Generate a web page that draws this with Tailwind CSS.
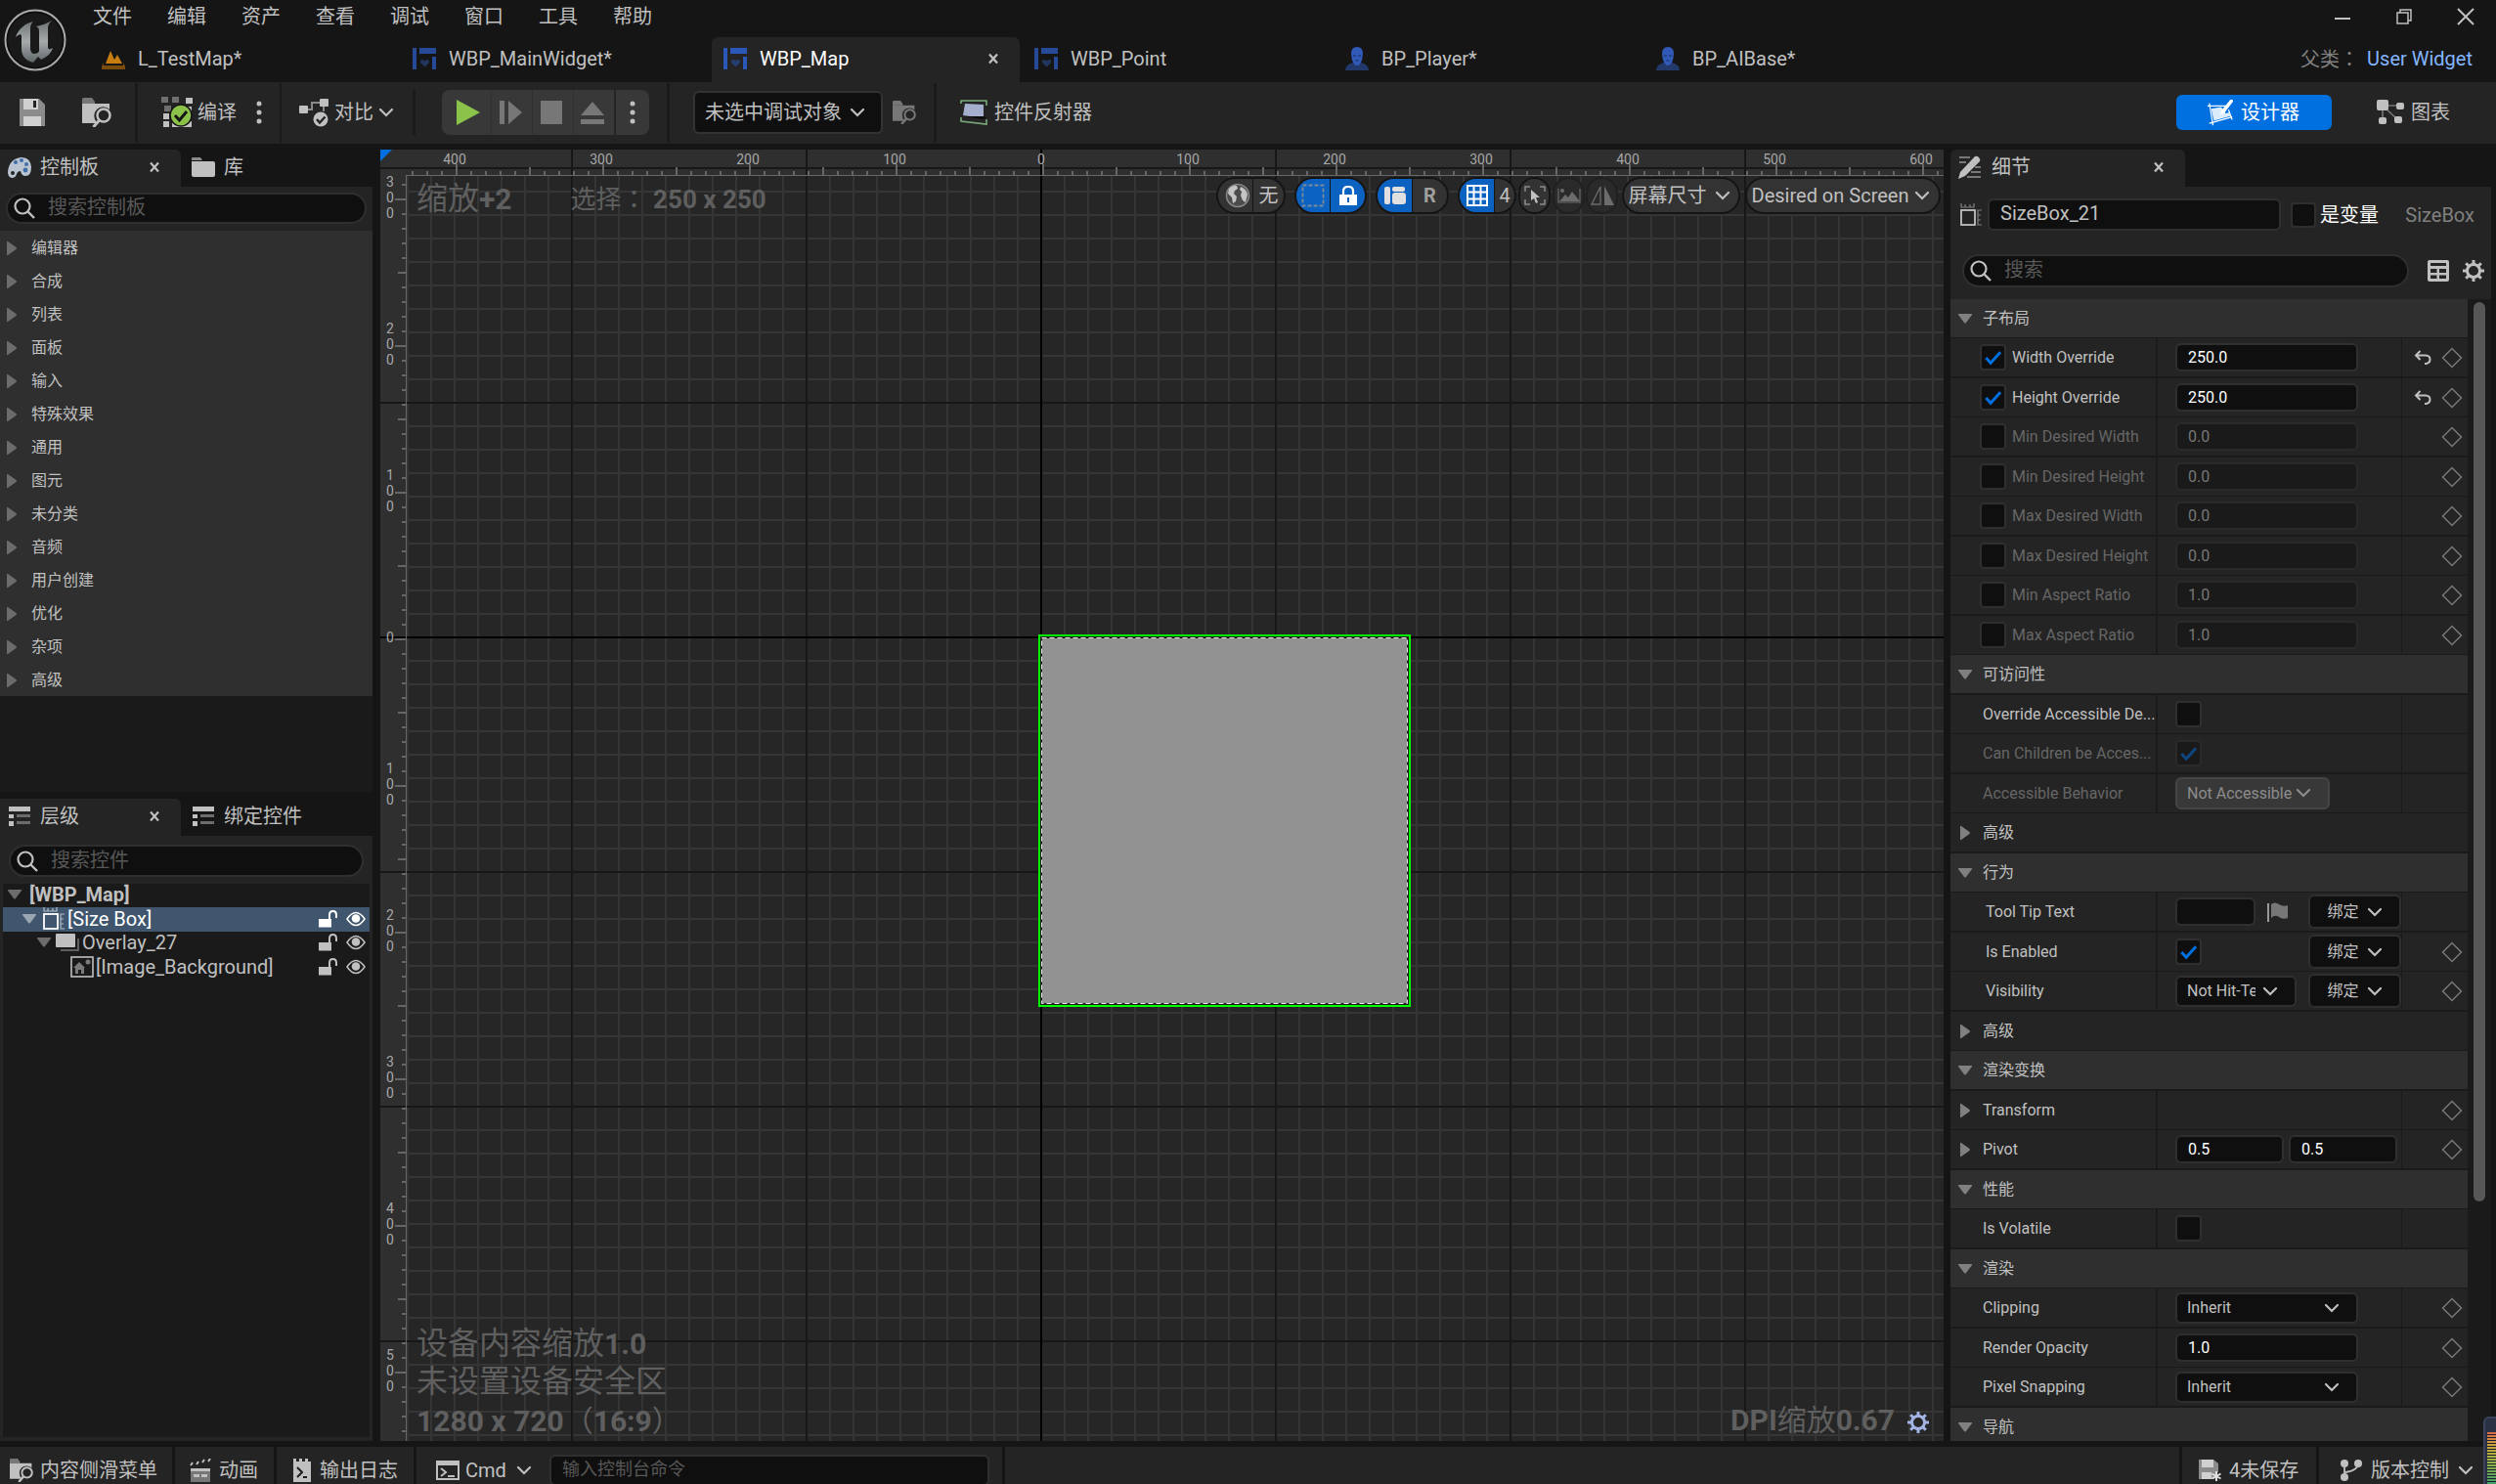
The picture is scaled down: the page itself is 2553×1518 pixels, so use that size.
<!DOCTYPE html>
<html lang="zh-CN">
<head>
    <meta charset="UTF-8">
    <meta name="viewport" content="width=device-width, initial-scale=1.0">
    <title>WBP_Map</title>
    <script src="https://cdn.jsdelivr.net/npm/@tailwindcss/browser@4"></script>
</head>
<body class="h-screen flex flex-col overflow-hidden bg-[#151515] text-[#c0c0c0] text-xl leading-6 font-['Roboto','Noto_Sans_CJK_SC',sans-serif]">

    <!-- icon sprite -->
    <svg class="hidden" xmlns="http://www.w3.org/2000/svg">
        <symbol id="i-close" viewBox="0 0 12 12"><path d="M2 1.500l8 9M10 1.500l-8 9" stroke="currentColor" stroke-width="2.200" fill="none"/></symbol>
        <symbol id="i-chevron" viewBox="0 0 16 16"><path d="M2 5l6 6 6-6" stroke="currentColor" stroke-width="2.200" fill="none" stroke-linecap="round"/></symbol>
        <symbol id="i-right" viewBox="0 0 12 16"><path d="M1 1.500q0-1 1-.5l8.500 6q1 1 0 2l-8.500 6q-1 .5-1-.5z" fill="currentColor"/></symbol>
        <symbol id="i-down" viewBox="0 0 16 12"><path d="M1.500 1h13q1 0 .5 1l-6 8q-1 1-2 0l-6-8q-.5-1 .5-1z" fill="currentColor"/></symbol>
        <symbol id="i-dots" viewBox="0 0 8 24"><g fill="currentColor"><circle cx="4" cy="3" r="2.500"/><circle cx="4" cy="12" r="2.500"/><circle cx="4" cy="21" r="2.500"/></g></symbol>
        <symbol id="i-search" viewBox="0 0 24 24"><circle cx="10" cy="10" r="7.500" stroke="currentColor" stroke-width="2.200" fill="none"/><path d="M15.500 15.500l6.500 6.500" stroke="currentColor" stroke-width="2.400"/></symbol>
        <symbol id="i-check" viewBox="0 0 20 20"><path d="M2.500 10.500l5 5.500L18 4.500" stroke="currentColor" stroke-width="3.200" fill="none"/></symbol>
        <symbol id="i-diamond" viewBox="0 0 22 22"><path d="M11 1.500L20.500 11 11 20.500 1.500 11z" stroke="currentColor" stroke-width="1.500" fill="none"/></symbol>
        <symbol id="i-reset" viewBox="0 0 18 16"><path d="M6.500 1L2 5.500 6.500 10M2.500 5.500H12q4.500.3 4.500 4t-4 4.500H11" stroke="currentColor" stroke-width="2" fill="none"/></symbol>
        <symbol id="i-level" viewBox="0 0 24 22"><path d="M4 16L9 3l4 9 3-5 5 9z" fill="#c87d10"/><path d="M0 19l2-4v3h20v-3l2 4v3H0z" fill="#7a4c0c"/></symbol>
        <symbol id="i-widget" viewBox="0 0 24 24"><path d="M0 1h4v22H0zM7 1h17v6H7zM20 10h4v13h-4z" fill="#2b58b8"/><path d="M12.500 20.500L8 16q-.5-3 2-3 1.800 0 2.500 1.500Q13.200 13 15 13q2.500 0 2 3z" fill="#263d70"/></symbol>
        <symbol id="i-pawn" viewBox="0 0 24 24"><path d="M0 24q0-6 8-8h8q8 2 8 8z" fill="#23396b"/><path d="M12 0q6 0 6 7-.5 8-3.500 11-2.500 2-5 0Q6.500 15 6 7 6 0 12 0z" fill="#3159b8"/><path d="M8 9h3M13 9h3M10.500 14h3" stroke="#1c2c55" stroke-width="1.200"/></symbol>
        <symbol id="i-save" viewBox="0 0 26 28"><path d="M0 0h20l6 6v22H0z" fill="#8c8c8c"/><path d="M4 0h15v11H4zM4 18h18v10H4z" fill="#d0d0d0"/><path d="M14 2h3v7h-3z" fill="#242424"/></symbol>
        <symbol id="i-browse" viewBox="0 0 30 30"><path d="M0 5V1.500Q0 0 1.500 0H10l3 4v2H0z" fill="#777"/><path d="M0 6h28v6a9 9 0 0 0-13 13l-1 1H0z" fill="currentColor"/><circle cx="22" cy="18" r="6.500" stroke="currentColor" stroke-width="2.500" fill="none"/><path d="M17.500 23l-6 7" stroke="currentColor" stroke-width="3"/></symbol>
        <symbol id="i-compile" viewBox="0 0 32 32"><path d="M0 0h7v6H0zM11 0h7v6h-7zM3 9h7v6H3z" fill="#6f6f6f"/><path d="M25 1h7v6h-7zM14 9h7v6h-7zM2 17h6v6H2zM2 25h6v6H2zM11 25h20v6H11zM25 10h6v6h-6z" fill="#c0c0c0"/><circle cx="20" cy="19" r="11" fill="#8bc34a" stroke="#151515" stroke-width="1.500"/><path d="M14 19l4.500 5 7.500-9" stroke="#151515" stroke-width="3" fill="none"/></symbol>
        <symbol id="i-diff" viewBox="0 0 32 30"><path d="M8 12h6V5h8" stroke="#8a8a8a" stroke-width="2" fill="none"/><rect x="1" y="8" width="9" height="8" rx="1" fill="currentColor"/><rect x="22" y="1" width="9" height="8" rx="1" fill="currentColor"/><path d="M26 9v5" stroke="#8a8a8a" stroke-width="2"/><circle cx="23" cy="22" r="7.500" fill="currentColor"/><path d="M19 22l3 3.500 5.500-6" stroke="#242424" stroke-width="2.400" fill="none"/></symbol>
        <symbol id="i-reflector" viewBox="0 0 28 26"><path d="M1 4V1h26v5M27 20v5L1 22v-4" stroke="#79a97a" stroke-width="1.600" fill="none"/><path d="M5 4l19 1v14L3 16z" fill="#a5aecd"/><path d="M4 17l20 3 3-2-3-1z" fill="#0b0b0b"/></symbol>
        <symbol id="i-designer" viewBox="0 0 30 30"><path d="M1 8h22M3 5l4 24M3 27l25-7M24 12l4 11" stroke="#fff" stroke-width="1.300" fill="none"/><path d="M5 11l11-2 5 7 4-1 1 4-18 5z" fill="#d9ecfb"/><path d="M15 18l1-5L26 1q3-1 3 2l-9 12z" fill="#fff"/></symbol>
        <symbol id="i-graph" viewBox="0 0 28 26"><path d="M6 6h16M6 6v16M6 6l16 15" stroke="#777" stroke-width="1.600"/><g fill="currentColor"><rect width="12" height="11" rx="2"/><rect x="20" y="3" width="8" height="7" rx="2"/><rect x="2" y="18" width="8" height="7" rx="2"/><rect x="18" y="17" width="8" height="7" rx="2"/></g></symbol>
        <symbol id="i-palette" viewBox="0 0 24 22"><path d="M0 16Q1 3 13 1q10-1 11 10 0 9-6 9-4 0-5-5-3 0-4 3-1 4-5 4-4-1-4-6z" fill="#b9c4d0"/><g fill="#3f6fa8"><circle cx="8" cy="6" r="2"/><circle cx="14" cy="4" r="2"/><circle cx="19" cy="8" r="2"/><circle cx="18" cy="14" r="2.400"/></g><circle cx="5" cy="17" r="2" fill="#242424"/></symbol>
        <symbol id="i-folder" viewBox="0 0 24 20"><path d="M0 3V1q0-1 1-1h8l2 3z" fill="#8a8a8a"/><path d="M0 4h22q2 0 2 2v12q0 2-2 2H2q-2 0-2-2z" fill="currentColor"/></symbol>
        <symbol id="i-tree" viewBox="0 0 22 20"><path d="M0 0h22v5H0zM0 8h5v4H0zM0 15h5v5H0z" fill="currentColor"/><path d="M8 8h14v3H8zM8 15h14v3H8z" fill="#6c6c6c"/></symbol>
        <symbol id="i-sizebox" viewBox="0 0 24 24"><rect x="2" y="7" width="14" height="15" fill="none" stroke="currentColor" stroke-width="1.800"/><path d="M2 0v4h13V0M6 1v3M11 1v3M23 7h-4v15h4M19 12h3M19 17h3" stroke="currentColor" stroke-width="1.200" fill="none" opacity=".6"/></symbol>
        <symbol id="i-overlay" viewBox="0 0 24 18"><rect width="20" height="14" rx="1" fill="currentColor"/><path d="M23 5v12H5" stroke="#777" stroke-width="1.500" fill="none"/></symbol>
        <symbol id="i-image" viewBox="0 0 24 22"><rect x="1" y="1" width="22" height="20" fill="none" stroke="currentColor" stroke-width="1.600"/><path d="M3 12l6-6 6 6h-1v6h-3v-4H8v4H5v-6z" fill="#7b7b7b"/><circle cx="18" cy="6" r="2.500" fill="#7b7b7b"/></symbol>
        <symbol id="i-unlock" viewBox="0 0 20 18"><path d="M0 9h13v8.500H0z" fill="currentColor"/><path d="M11 9V5q0-4 3.500-4T18 5v3" stroke="currentColor" stroke-width="2" fill="none"/></symbol>
        <symbol id="i-eye" viewBox="0 0 20 16"><path d="M1 8q9-13 18 0-9 13-18 0z" stroke="currentColor" stroke-width="1.500" fill="none"/><circle cx="10" cy="7.500" r="4.300" fill="currentColor"/></symbol>
        <symbol id="i-details" viewBox="0 0 24 24"><path d="M1 2h11M1 7h7M17 12h6M13 17h10M9 22h14" stroke="#777" stroke-width="1.800"/><path d="M0 24l2-7L17 1q2-1 4 1 2 2 1 4L7 21z" fill="currentColor"/></symbol>
        <symbol id="i-table" viewBox="0 0 22 22"><path fill-rule="evenodd" d="M2 0h18q2 0 2 2v18q0 2-2 2H2q-2 0-2-2V2q0-2 2-2zM3 3v3h16V3zM3 9v4h6.500V9zM12 9v4h7V9zM3 15.500V19h6.500v-3.500zM12 15.500V19h7v-3.500z" fill="currentColor"/></symbol>
        <symbol id="i-gear" viewBox="0 0 24 24"><circle cx="12" cy="12" r="6.500" fill="none" stroke="currentColor" stroke-width="3"/><path d="M12 1v4M12 19v4M1 12h4M19 12h4M4.200 4.200L7 7M17 17l2.800 2.800M19.800 4.200L17 7M7 17l-2.800 2.800" stroke="currentColor" stroke-width="3"/></symbol>
        <symbol id="i-flag" viewBox="0 0 22 20"><path d="M1 1v19" stroke="currentColor" stroke-width="1.500"/><path d="M4 2q4-3 8 0t9 1v13q-5 2-9-1t-8 1z" fill="#777"/></symbol>
        <symbol id="i-globe" viewBox="0 0 26 26"><circle cx="13" cy="13" r="11.500" fill="#4c4c4c" stroke="#888" stroke-width="1.500"/><path d="M4 6q4-4 8-3l1 3-3 2-1 3 3 3-1 5-3 2-1-6-4-4zM16 4q6 2 7 8l-2 8-3-2-2-5 1-4-2-2z" fill="#c4c4c4"/></symbol>
        <symbol id="i-dashbox" viewBox="0 0 24 24"><rect x="1.500" y="1.500" width="21" height="21" fill="none" stroke="#7b8b9c" stroke-width="1.800" stroke-dasharray="4 2"/></symbol>
        <symbol id="i-lock" viewBox="0 0 18 20"><path d="M0 9h18v11H0z" fill="currentColor"/><path d="M4 9V5.500Q4 1 9 1t5 4.500V9" stroke="currentColor" stroke-width="2.200" fill="none"/><path d="M8 12h2v5H8z" fill="#0b62c0"/></symbol>
        <symbol id="i-layout" viewBox="0 0 22 20"><g fill="currentColor"><rect y="1" width="6" height="18" rx="2"/><rect x="8" y="1" width="13" height="5" rx="2"/><rect x="8" y="7" width="14" height="12" rx="3"/></g></symbol>
        <symbol id="i-grid" viewBox="0 0 22 22"><path d="M1 1h20v20H1zM7.500 1v20M14.500 1v20M1 7.500h20M1 14.500h20" stroke="currentColor" stroke-width="2" fill="none"/></symbol>
        <symbol id="i-pick" viewBox="0 0 22 20"><path d="M1 6V1h5M16 1h5v5M21 14v5h-5M6 19H1v-5" stroke="#8c8c8c" stroke-width="1.500" fill="none"/><path d="M7 4l9 8h-4l2 5-2 1-2-5-3 2z" fill="currentColor"/></symbol>
        <symbol id="i-picture" viewBox="0 0 24 16"><path d="M1 1v14h22V1" stroke="currentColor" stroke-width="1.200" fill="none"/><path d="M2 14l6-7 3 3 4-6 8 10z" fill="currentColor"/><circle cx="5" cy="3" r="2" fill="currentColor"/></symbol>
        <symbol id="i-mirror" viewBox="0 0 24 20"><path d="M10 1v18H1z" stroke="currentColor" stroke-width="1.300" fill="none"/><path d="M14 0v20h10z" fill="currentColor"/></symbol>
        <symbol id="i-clap" viewBox="0 0 24 24"><path d="M2 10h20v14H2z" fill="#777"/><path d="M2 10h20v3H2zM5 16h6v3H5zM13 16h6v3h-6z" fill="#c0c0c0"/><path d="M2 7l2-3M8 6l2-3M14 4l2-3M20 3l2-3" stroke="#c0c0c0" stroke-width="2"/></symbol>
        <symbol id="i-log" viewBox="0 0 18 24"><path d="M0 0h3v3h3V0h3v3h3V0h3v3h3v21H0z" fill="currentColor"/><path d="M4 9l5 5-5 5M10 19h4" stroke="#1c1c1c" stroke-width="2" fill="none"/></symbol>
        <symbol id="i-cmd" viewBox="0 0 24 20"><path d="M1 1h22v18H1z" fill="none" stroke="currentColor" stroke-width="2"/><path d="M1 1h22v4H1z" fill="currentColor"/><path d="M5 8l5 4-5 4M12 16h7" stroke="currentColor" stroke-width="2" fill="none"/></symbol>
        <symbol id="i-unsaved" viewBox="0 0 24 22"><path d="M0 0h15l5 4v8l-4 8H0z" fill="#8c8c8c"/><path d="M3 0h12v8H3zM3 13h10v7H3z" fill="#d0d0d0"/><path d="M18 12v10M13.500 14.500l9 5M22.500 14.500l-9 5" stroke="#e0e0e0" stroke-width="2"/></symbol>
        <symbol id="i-branch" viewBox="0 0 22 22"><path d="M4 4v14M18 4q0 7-13 9" stroke="currentColor" stroke-width="1.800" fill="none"/><g fill="currentColor"><circle cx="4" cy="4" r="4"/><circle cx="18" cy="4" r="4"/><circle cx="4" cy="18" r="4"/></g></symbol>
    </svg>

    <header class="flex-none flex">
        <div class="w-[92px] pl-1 pt-[9px]">
            <svg class="w-16 h-16" viewBox="0 0 64 64">
                <defs><linearGradient id="steel" x1="0" y1="0" x2="0" y2="1"><stop offset="0" stop-color="#6d7274"/><stop offset=".5" stop-color="#a5aaab"/><stop offset="1" stop-color="#5f6668"/></linearGradient></defs>
                <circle cx="32" cy="32" r="30.500" fill="#0c0c0c" stroke="#a9a9a9" stroke-width="2"/>
                <circle cx="32" cy="32" r="28" fill="#191919"/>
                <path fill="url(#steel)" d="M12 29C15 20 22 15 30 13c-2 2-3 4-3 7v20c0 4 2 6 4 6 3 0 5-2 5-3V23c0-3-1-4-3-5 6-1 11-3 16-6-3 3-4 5-4 8v19c0 3 2 3 5 1-2 6-6 9-12 12l-3-3-5 6C22 53 18 48 18 41V28c0-3-3-2-6 1z"/>
            </svg>
        </div>
        <div class="flex-1 flex flex-col gap-1">
            <div class="flex h-[34px]">
                <nav class="flex-1 flex items-center gap-9 pl-[3px]">
                    <button>文件</button><button>编辑</button><button>资产</button><button>查看</button><button>调试</button><button>窗口</button><button>工具</button><button>帮助</button>
                </nav>
                <button aria-label="最小化" class="w-[63px] grid place-items-center"><svg class="size-4" viewBox="0 0 16 16"><path d="M0 10h16" stroke="currentColor" stroke-width="2"/></svg></button>
                <button aria-label="还原" class="w-[63px] grid place-items-center"><svg class="size-4" viewBox="0 0 16 16"><path d="M1 4h11v11H1zM4 4V1h11v11h-3" stroke="currentColor" stroke-width="1.500" fill="none"/></svg></button>
                <button aria-label="关闭" class="w-[63px] grid place-items-center"><svg class="size-[18px]" viewBox="0 0 18 18"><path d="M1 1l16 16M17 1L1 17" stroke="currentColor" stroke-width="2"/></svg></button>
            </div>
            <div class="flex h-[46px] gap-[3px]">
                <button class="w-[315px] flex items-center pl-3 pb-[2px] gap-[13px]"><svg class="size-6"><use href="#i-level"/></svg>L_TestMap*</button>
                <button class="w-[315px] flex items-center pl-3 pb-[2px] gap-[13px]"><svg class="size-6 opacity-80"><use href="#i-widget"/></svg>WBP_MainWidget*</button>
                <div class="w-[315px] flex items-center pl-3 pb-[2px] gap-[13px] rounded-t-md bg-[#242424] text-white">
                    <svg class="size-6"><use href="#i-widget"/></svg><span class="flex-1">WBP_Map</span>
                    <button aria-label="关闭标签" class="w-[33px] text-[#c0c0c0]"><svg class="size-3"><use href="#i-close"/></svg></button>
                </div>
                <button class="w-[315px] flex items-center pl-3 pb-[2px] gap-[13px]"><svg class="size-6 opacity-80"><use href="#i-widget"/></svg>WBP_Point</button>
                <button class="w-[315px] flex items-center pl-3 pb-[2px] gap-[13px]"><svg class="size-6"><use href="#i-pawn"/></svg>BP_Player*</button>
                <button class="w-[315px] flex items-center pl-3 pb-[2px] gap-[13px]"><svg class="size-6"><use href="#i-pawn"/></svg>BP_AIBase*</button>
                <div class="ml-auto pr-6 pb-[2px] flex items-center gap-2"><span class="text-[#808080]">父类<span lang="zh-TW" class="font-['Noto_Sans_CJK_TC',sans-serif]">：</span></span><a href="#" class="text-[#84b5ff]">User Widget</a></div>
            </div>
        </div>
    </header>

    <div class="flex-none h-[63px] pb-px bg-[#242424] flex items-center">
        <div class="w-[138px] flex items-center pl-5 gap-[38px]">
            <button aria-label="保存"><svg class="w-[26px] h-7"><use href="#i-save"/></svg></button>
            <button aria-label="浏览"><svg class="w-[30px] h-[30px]"><use href="#i-browse"/></svg></button>
        </div>
        <div class="w-[3px] h-[61px] bg-[#1a1a1a]"></div>
        <div class="w-[145px] flex items-center pl-6">
            <button class="flex items-center gap-[5px]"><svg class="size-8"><use href="#i-compile"/></svg>编译</button>
            <button aria-label="编译选项" class="ml-[19px]"><svg class="w-2 h-6"><use href="#i-dots"/></svg></button>
        </div>
        <div class="w-[2px] h-[61px] bg-[#1a1a1a]"></div>
        <button class="w-[134px] flex items-center pl-[17px] gap-[5px]"><svg class="w-8 h-[30px]"><use href="#i-diff"/></svg>对比<svg class="size-4"><use href="#i-chevron"/></svg></button>
        <div class="w-[3px] h-[46px] bg-[#1a1a1a]"></div>
        <div class="ml-[27px] w-[212px] h-[46px] rounded-lg bg-[#383838] flex overflow-hidden">
            <button aria-label="播放" class="w-[51px] pl-[3px] grid place-items-center border-r border-[#303030]"><svg class="w-6 h-[26px]" viewBox="0 0 24 26"><path d="M0 0l24 13L0 26z" fill="#8bc34a"/></svg></button>
            <button aria-label="步进" class="w-[42px] pr-1 grid place-items-center border-r border-[#303030]"><svg class="w-6 h-6" viewBox="0 0 24 24"><path d="M1 0h5v24H1zM10 0l14 12-14 12z" fill="#777"/></svg></button>
            <button aria-label="停止" class="w-[42px] pr-1 grid place-items-center border-r border-[#303030]"><svg class="w-[22px] h-6" viewBox="0 0 22 24"><path d="M0 0h22v24H0z" fill="#777"/></svg></button>
            <button aria-label="弹出" class="w-[43px] pr-1 grid place-items-center border-r-2 border-[#242424]"><svg class="w-6 h-6" viewBox="0 0 24 24"><path d="M12 1l12 14H0zM0 19h24v5H0z" fill="#777"/></svg></button>
            <button aria-label="播放选项" class="flex-1 grid place-items-center"><svg class="w-2 h-6"><use href="#i-dots"/></svg></button>
        </div>
        <div class="ml-[18px] w-[3px] h-[61px] bg-[#1a1a1a]"></div>
        <div class="relative ml-6">
            <select aria-label="调试对象" class="block appearance-none w-[194px] h-11 pl-[10px] pr-8 rounded-md border-2 border-[#333] bg-[#0f0f0f]"><option>未选中调试对象</option></select>
            <svg class="absolute right-[18px] top-[14px] size-4 pointer-events-none"><use href="#i-chevron"/></svg>
        </div>
        <button aria-label="浏览调试对象" class="ml-[10px] text-[#777]"><svg class="w-6 h-6"><use href="#i-browse"/></svg></button>
        <div class="ml-[18px] w-[3px] h-[61px] bg-[#1a1a1a]"></div>
        <button class="ml-6 flex items-center gap-[7px]"><svg class="w-7 h-[26px]"><use href="#i-reflector"/></svg>控件反射器</button>
        <button class="ml-auto w-[159px] h-9 pr-[2px] rounded-md bg-[#0070e0] text-white flex items-center justify-center gap-[7px]"><svg class="size-7"><use href="#i-designer"/></svg>设计器</button>
        <button class="ml-[46px] mr-[47px] flex items-center gap-[7px]"><svg class="w-7 h-[26px]"><use href="#i-graph"/></svg>图表</button>
    </div>

    <main class="flex-1 min-h-0 flex my-[6px]">

        <aside class="flex-none w-[381px] mr-2 flex flex-col gap-[7px]">
            <section class="flex-1 min-h-0 flex flex-col">
                <div class="h-[38px] flex">
                    <div class="w-[185px] rounded-tr-md bg-[#242424] flex items-center pl-2 pb-[3px] gap-[9px]">
                        <svg class="w-6 h-[22px]"><use href="#i-palette"/></svg><span class="flex-1">控制板</span>
                        <button aria-label="关闭控制板" class="w-[33px]"><svg class="size-3"><use href="#i-close"/></svg></button>
                    </div>
                    <button class="flex items-center pl-[11px] pb-[3px] gap-[9px]"><svg class="w-6 h-5"><use href="#i-folder"/></svg>库</button>
                </div>
                <div class="h-[45px] bg-[#242424] pt-[6px] px-[6px]">
                    <label class="h-8 flex items-center rounded-full border-2 border-[#2f2f2f] bg-[#0f0f0f] pl-[5px] gap-3">
                        <svg class="size-6"><use href="#i-search"/></svg>
                        <input type="search" placeholder="搜索控制板" aria-label="搜索控制板" class="flex-1 min-w-0 pb-[2px] bg-transparent outline-none placeholder:text-[#575757]">
                    </label>
                </div>
                <ul id="palette" class="bg-[#2f2f2f] text-base"></ul>
                <div class="flex-1 bg-[#1a1a1a]"></div>
            </section>
            <section class="flex-1 min-h-0 flex flex-col">
                <div class="h-[38px] flex">
                    <div class="w-[185px] rounded-tr-md bg-[#242424] flex items-center pl-[9px] pb-[3px] gap-[10px]">
                        <svg class="w-[22px] h-5"><use href="#i-tree"/></svg><span class="flex-1">层级</span>
                        <button aria-label="关闭层级" class="w-[33px]"><svg class="size-3"><use href="#i-close"/></svg></button>
                    </div>
                    <button class="flex items-center pl-3 pb-[3px] gap-[10px]"><svg class="w-[22px] h-5"><use href="#i-tree"/></svg>绑定控件</button>
                </div>
                <div class="flex-1 bg-[#242424] p-[3px] pb-1 flex flex-col">
                    <label class="flex-none mx-[6px] mt-[6px] mb-[7px] h-[33px] flex items-center rounded-full border-2 border-[#2f2f2f] bg-[#0f0f0f] pl-[5px] gap-3">
                        <svg class="size-6"><use href="#i-search"/></svg>
                        <input type="search" placeholder="搜索控件" aria-label="搜索控件" class="flex-1 min-w-0 pb-[2px] bg-transparent outline-none placeholder:text-[#575757]">
                    </label>
                    <div class="flex-1 bg-[#1a1a1a] leading-[22px]">
                        <div class="h-6 flex items-center pl-1 pb-[2px] gap-[7px] font-bold"><svg class="w-4 h-3 text-[#6c6c6c]"><use href="#i-down"/></svg>[WBP_Map]</div>
                        <div class="h-[25px] flex items-center pl-[19px] pr-1 pb-[2px] bg-[#40566f] text-white"><svg class="w-4 h-3 mr-[5px] text-[#9aa5b2]"><use href="#i-down"/></svg><svg class="w-6 h-6 mr-[2px]"><use href="#i-sizebox"/></svg><span class="flex-1">[Size Box]</span><button aria-label="锁定"><svg class="w-5 h-[18px] mr-2"><use href="#i-unlock"/></svg></button><button aria-label="可见"><svg class="w-5 h-4"><use href="#i-eye"/></svg></button></div>
                        <div class="h-6 flex items-center pl-[34px] pr-1 pb-[2px]"><svg class="w-4 h-3 mr-1 text-[#6c6c6c]"><use href="#i-down"/></svg><svg class="w-6 h-[18px] mr-[3px]"><use href="#i-overlay"/></svg><span class="flex-1">Overlay_27</span><button aria-label="锁定"><svg class="w-5 h-[18px] mr-2"><use href="#i-unlock"/></svg></button><button aria-label="可见"><svg class="w-5 h-4"><use href="#i-eye"/></svg></button></div>
                        <div class="h-[25px] flex items-center pl-[69px] pr-1 pb-[2px]"><svg class="w-6 h-[22px] mr-[2px]"><use href="#i-image"/></svg><span class="flex-1">[Image_Background]</span><button aria-label="锁定"><svg class="w-5 h-[18px] mr-2"><use href="#i-unlock"/></svg></button><button aria-label="可见"><svg class="w-5 h-4"><use href="#i-eye"/></svg></button></div>
                    </div>
                </div>
            </section>
        </aside>

        <section class="relative flex-1 min-w-0 overflow-hidden bg-[#262626]">
            <svg class="absolute inset-0 w-full h-full" xmlns="http://www.w3.org/2000/svg">
                <defs>
                    <pattern id="minor" x="675" y="498" width="24" height="24" patternUnits="userSpaceOnUse"><path d="M0 0h24v2H2v22H0z" fill="#353535"/></pattern>
                    <pattern id="major" x="675" y="498" width="240" height="240" patternUnits="userSpaceOnUse"><path d="M0 0h240v2H2v238H0z" fill="#171717"/></pattern>
                </defs>
                <rect width="100%" height="100%" fill="url(#minor)"/>
                <rect width="100%" height="27" fill="#2f2f2f"/>
                <rect width="27" height="100%" fill="#2f2f2f"/>
                <rect width="100%" height="100%" fill="url(#major)"/>
                <rect x="675" width="2" height="100%" fill="#000"/>
                <rect y="498" width="100%" height="2" fill="#000"/>
                <path d="M0 0h12L0 12z" fill="#0070e0"/>
                <rect x="26" y="26" width="100%" height="1" fill="#666"/>
                <rect x="26" y="26" width="1" height="100%" fill="#666"/>
                <path id="ticks" fill="#666"/>
                <g id="rulerLabels" fill="#a8a8a8" font-size="14" text-anchor="middle"></g>
                <!-- selected size box -->
                <rect x="674" y="497" width="379" height="379" fill="#929292" stroke="#0f0" stroke-width="2"/>
                <rect x="676" y="499" width="375" height="375" fill="none" stroke="#1c1c1c" stroke-width="2"/>
                <rect x="676.500" y="499.500" width="374" height="374" fill="none" stroke="#e6e6e6" stroke-dasharray="5 3"/>
            </svg>

            <div class="absolute left-[37px] top-[29px] flex items-center gap-[60px] text-[#5f5f5f] font-bold">
                <span class="text-[30px] leading-10"><span class="text-[32px] font-normal">缩放</span>+2</span>
                <span class="text-[26px] leading-10"><span class="font-normal">选择<span lang="zh-TW" class="font-['Noto_Sans_CJK_TC',sans-serif]">：</span></span> 250 x 250</span>
            </div>
            <div class="absolute left-[37px] bottom-px text-[30px] leading-[38px] text-[#5f5f5f] font-bold">
                <p><span class="text-[32px] font-normal">设备内容缩放</span>1.0</p>
                <p class="text-[32px] leading-[38px] font-normal">未设置设备安全区</p>
                <p>1280 x 720<span lang="zh-TW" class="font-normal font-['Noto_Sans_CJK_TC',sans-serif]">（</span>16:9<span lang="zh-TW" class="font-normal font-['Noto_Sans_CJK_TC',sans-serif]">）</span></p>
            </div>
            <div class="absolute right-[14px] bottom-[2px] flex items-center gap-3 text-[30px] leading-[38px] text-[#5f5f5f] font-bold">
                <span>DPI<span class="font-normal">缩放</span>0.67</span>
                <button aria-label="DPI 设置" class="pt-1 text-[#a3b4e4]"><svg class="size-6"><use href="#i-gear"/></svg></button>
            </div>

            <div class="absolute right-[3px] top-7 h-[38px] flex items-center">
                <div class="flex h-[38px] rounded-full overflow-hidden border-2 border-[#151515] bg-[#333]">
                    <button aria-label="本地化" class="w-9 pl-1 grid place-items-center border-r border-[#151515]"><svg class="size-[26px]"><use href="#i-globe"/></svg></button>
                    <button class="w-[31px]">无</button>
                </div>
                <div class="ml-[9px] flex h-[38px] rounded-full overflow-hidden border-2 border-[#151515] bg-[#0b62c0] text-white">
                    <button aria-label="虚线轮廓" class="w-[35px] grid place-items-center border-r border-[#151515]"><svg class="size-6"><use href="#i-dashbox"/></svg></button>
                    <button aria-label="遵守锁定" class="w-[35px] grid place-items-center"><svg class="w-[18px] h-5"><use href="#i-lock"/></svg></button>
                </div>
                <div class="ml-[9px] flex h-[38px] rounded-full overflow-hidden border-2 border-[#151515] bg-[#333]">
                    <button aria-label="布局变换" class="w-9 grid place-items-center border-r border-[#151515] bg-[#0b62c0] text-[#e0e0e0]"><svg class="w-[22px] h-5"><use href="#i-layout"/></svg></button>
                    <button class="w-[35px] font-bold text-[#a0a0a0]">R</button>
                </div>
                <div class="ml-[9px] flex h-[38px] rounded-full overflow-hidden border-2 border-[#151515] bg-[#333]">
                    <button aria-label="网格对齐" class="w-9 grid place-items-center border-r border-[#151515] bg-[#0b62c0] text-white"><svg class="size-[22px]"><use href="#i-grid"/></svg></button>
                    <button class="w-5">4</button>
                </div>
                <button aria-label="选择" class="ml-[2px] w-[33px] h-[38px] rounded-full border-2 border-[#151515] bg-[#333] grid place-items-center"><svg class="w-[22px] h-5"><use href="#i-pick"/></svg></button>
                <button aria-label="图像" class="ml-[2px] w-[33px] h-[38px] rounded-full border-2 border-[#202020] bg-[#2a2a2a] text-[#6c6c6c] grid place-items-center"><svg class="w-6 h-4"><use href="#i-picture"/></svg></button>
                <button aria-label="镜像" class="ml-[1px] w-[33px] h-[38px] rounded-full border-2 border-[#202020] bg-[#2a2a2a] text-[#6c6c6c] grid place-items-center"><svg class="w-6 h-5"><use href="#i-mirror"/></svg></button>
                <button class="ml-1 w-[121px] h-[38px] pr-1 rounded-full border-2 border-[#151515] bg-[#333] flex items-center justify-center gap-2">屏幕尺寸<svg class="size-4"><use href="#i-chevron"/></svg></button>
                <button class="ml-[5px] w-[200px] h-[38px] pr-1 rounded-full border-2 border-[#151515] bg-[#333] flex items-center justify-center gap-[6px] whitespace-nowrap">Desired on Screen<svg class="size-4"><use href="#i-chevron"/></svg></button>
            </div>
        </section>

        <aside class="flex-none w-[553px] ml-[7px] mr-[5px] flex flex-col">
            <div class="flex-none h-[38px] w-[240px] rounded-t-md bg-[#242424] flex items-center pl-2 pb-[3px] gap-[10px]">
                <svg class="size-6"><use href="#i-details"/></svg><span class="flex-1">细节</span>
                <button aria-label="关闭细节" class="w-[33px]"><svg class="size-3"><use href="#i-close"/></svg></button>
            </div>
            <div class="flex-none h-[115px] bg-[#242424] pt-3">
                <div class="flex items-center pl-[9px] pr-[17px]">
                    <svg class="size-6"><use href="#i-sizebox"/></svg>
                    <input type="text" value="SizeBox_21" aria-label="名称" class="ml-[5px] w-[300px] h-[33px] px-[11px] pb-1 rounded-md border-2 border-[#2f2f2f] bg-[#0f0f0f] outline-none">
                    <label class="ml-[10px] flex items-center gap-1 text-white"><input type="checkbox" class="appearance-none size-[26px] rounded-[4px] border-2 border-[#2f2f2f] bg-[#0f0f0f]">是变量</label>
                    <span class="ml-auto text-[#808080]">SizeBox</span>
                </div>
                <div class="mt-6 flex items-center pl-3 pr-[6px]">
                    <label class="w-[457px] h-[34px] flex items-center rounded-full border-2 border-[#2f2f2f] bg-[#0f0f0f] pl-[5px] gap-3">
                        <svg class="size-6"><use href="#i-search"/></svg>
                        <input type="search" placeholder="搜索" aria-label="搜索细节" class="flex-1 min-w-0 pb-[2px] bg-transparent outline-none placeholder:text-[#575757]">
                    </label>
                    <button aria-label="属性矩阵" class="ml-auto"><svg class="size-[22px]"><use href="#i-table"/></svg></button>
                    <button aria-label="设置" class="ml-[13px]"><svg class="size-6"><use href="#i-gear"/></svg></button>
                </div>
            </div>
            <div class="flex-1 min-h-0 flex bg-[#1a1a1a]">
                <div id="properties" class="flex-1 min-w-0 overflow-hidden text-base"></div>
                <div class="w-6 pl-[6px] pt-[3px]"><div class="w-3 h-[79%] rounded-full bg-[#575757]"></div></div>
            </div>
        </aside>
    </main>

    <footer class="flex-none h-[38px] overflow-hidden bg-[#242424]">
        <div class="h-12 flex items-center">
            <button class="w-[176px] pl-[10px] flex items-center gap-[7px]"><svg class="size-6"><use href="#i-browse"/></svg>内容侧滑菜单</button>
            <div class="w-[3px] h-full bg-[#151515]"></div>
            <button class="w-[101px] pl-[14px] flex items-center gap-[7px]"><svg class="size-6"><use href="#i-clap"/></svg>动画</button>
            <div class="w-[3px] h-full bg-[#151515]"></div>
            <button class="w-[140px] pl-[17px] flex items-center gap-[9px]"><svg class="w-[18px] h-6"><use href="#i-log"/></svg>输出日志</button>
            <div class="w-[3px] h-full bg-[#151515]"></div>
            <button class="w-[136px] pl-5 flex items-center gap-[6px]"><svg class="w-6 h-5"><use href="#i-cmd"/></svg>Cmd<svg class="ml-1 size-4"><use href="#i-chevron"/></svg></button>
            <input type="text" placeholder="输入控制台命令" aria-label="控制台命令" class="w-[450px] h-8 pb-1 px-[11px] rounded-md border-2 border-[#2f2f2f] bg-[#0f0f0f] text-lg outline-none placeholder:text-[#575757]">
            <div class="ml-[13px] w-[3px] h-full bg-[#151515]"></div>
            <div class="ml-auto w-[3px] h-full bg-[#151515]"></div>
            <button class="w-[137px] pl-[17px] flex items-center gap-[7px]"><svg class="w-6 h-[22px]"><use href="#i-unsaved"/></svg>4未保存</button>
            <div class="w-[3px] h-full bg-[#151515]"></div>
            <button class="w-[181px] pl-[22px] flex items-center gap-[9px]"><svg class="size-[22px]"><use href="#i-branch"/></svg>版本控制<svg class="size-4"><use href="#i-chevron"/></svg></button>
        </div>
    </footer>

    <!-- level meter docked in the screen corner -->
    <div class="fixed right-0 bottom-0 w-[13px] h-[69px] rounded-tl-md bg-[#2a3142] border-l-2 border-t-2 border-[#39435a] pl-[2px] pt-[14px]">
        <div class="h-full bg-[repeating-linear-gradient(transparent_0_2px,#1a1f2b_2px_3px),linear-gradient(#d9674a,#c9a23c_25%,#a9b542_50%,#3fa06a)]"></div>
    </div>

    <script>
        const categories = ['编辑器', '合成', '列表', '面板', '输入', '特殊效果', '通用', '图元', '未分类', '音频', '用户创建', '优化', '杂项', '高级'];
        document.getElementById('palette').innerHTML = categories.map(name => `
            <li class="h-[34px] flex items-center pl-[6px] pt-[2px] gap-[14px]"><svg class="w-3 h-4 text-[#6c6c6c]"><use href="#i-right"/></svg>${name}</li>
        `).join('');

        // Ruler ticks: one per 10 units (15px), longer at 50 and 100
        let d = '';
        for (let k = -43; k <= 62; k++) {
            const len = k % 10 === 0 ? 12 : k % 5 === 0 ? 9 : 5;
            const x = 677 + k * 15;
            const y = 500 + k * 15;
            if (x > 27) d += `M${x} ${27 - len}h2v${len}h-2z`;
            if (y > 27) d += `M${27 - len} ${y}v2h${len}v-2z`;
        }
        document.getElementById('ticks').setAttribute('d', d);

        let labels = '';
        for (let n = -4; n <= 6; n++) {
            labels += `<text x="${676 + n * 150}" y="15">${Math.abs(n * 100)}</text>`;
        }
        for (let n = -3; n <= 5; n++) {
            const digits = String(Math.abs(n * 100)).split('');
            digits.forEach((c, i) => {
                const y = 504 + n * 150 + (i - (digits.length - 1) / 2) * 16;
                labels += `<text x="10" y="${y}">${c}</text>`;
            });
        }
        document.getElementById('rulerLabels').innerHTML = labels;

        // Details panel
        const chevron = '<svg class="absolute right-[19px] top-2 size-4 pointer-events-none"><use href="#i-chevron"/></svg>';

        function checkbox(id, checked, disabled) {
            return `<span class="relative flex-none size-[27px]">
                <input type="checkbox" id="${id}" ${checked ? 'checked' : ''} class="peer block appearance-none size-[27px] rounded-[4px] border-2 ${disabled ? 'border-[#2a2a2a] bg-[#1a1a1a]' : 'border-[#2f2f2f] bg-[#0f0f0f]'}">
                <svg class="hidden peer-checked:block absolute left-1 top-1 size-[19px] pointer-events-none ${disabled ? 'text-[#0f4680]' : 'text-[#0070e0]'}"><use href="#i-check"/></svg>
            </span>`;
        }

        function textBox(label, value, width, disabled) {
            return `<input type="text" value="${value}" aria-label="${label}" ${disabled ? 'disabled' : ''} class="${width} h-[29px] px-[11px] rounded-md border-2 outline-none ${disabled ? 'border-[#2a2a2a] bg-[#1a1a1a] text-[#777]' : 'border-[#2f2f2f] bg-[#0f0f0f] text-white'}">`;
        }

        function dropDown(label, value, width) {
            return `<span class="relative ${width}"><select aria-label="${label}" class="block appearance-none w-full h-8 pl-[10px] pr-10 rounded-md border-2 border-[#2f2f2f] bg-[#0f0f0f]"><option>${value}</option></select>${chevron}</span>`;
        }

        const bind = '<button class="absolute left-[154px] top-[2px] w-[95px] h-[35px] rounded-md border-2 border-[#2f2f2f] bg-[#0f0f0f] flex items-center justify-center gap-2">绑定<svg class="size-4"><use href="#i-chevron"/></svg></button>';

        const rows = [
            { head: '子布局' },
            { name: 'Width Override', override: true, on: true, value: '250.0' },
            { name: 'Height Override', override: true, on: true, value: '250.0' },
            { name: 'Min Desired Width', override: true, value: '0.0' },
            { name: 'Min Desired Height', override: true, value: '0.0' },
            { name: 'Max Desired Width', override: true, value: '0.0' },
            { name: 'Max Desired Height', override: true, value: '0.0' },
            { name: 'Min Aspect Ratio', override: true, value: '1.0' },
            { name: 'Max Aspect Ratio', override: true, value: '1.0' },
            { head: '可访问性' },
            { name: 'Override Accessible De...', html: checkbox('accessible', false) },
            { name: 'Can Children be Acces...', dim: true, html: checkbox('children', true, true) },
            { name: 'Accessible Behavior', dim: true, html: `<span class="relative w-[158px] text-[#8c8c8c]"><select aria-label="Accessible Behavior" class="block appearance-none w-full h-[33px] pl-[10px] pr-8 rounded-md border-2 border-[#454545] bg-[#383838]"><option>Not Accessible</option></select>${chevron}</span>` },
            { more: '高级' },
            { head: '行为' },
            { name: 'Tool Tip Text', indent: true, html: textBox('Tool Tip Text', '', 'w-[82px]') + '<svg class="ml-3 w-[22px] h-5"><use href="#i-flag"/></svg>' + bind },
            { name: 'Is Enabled', indent: true, key: true, html: checkbox('enabled', true) + bind },
            { name: 'Visibility', indent: true, key: true, html: dropDown('Visibility', 'Not Hit-Testable (Self Only)', 'w-[124px]') + bind },
            { more: '高级' },
            { head: '渲染变换' },
            { name: 'Transform', arrow: true, key: true, html: '' },
            { name: 'Pivot', arrow: true, key: true, html: textBox('Pivot X', '0.5', 'w-[111px]') + '<span class="w-[5px]"></span>' + textBox('Pivot Y', '0.5', 'w-[111px]') },
            { head: '性能' },
            { name: 'Is Volatile', html: checkbox('volatile', false) },
            { head: '渲染' },
            { name: 'Clipping', key: true, html: dropDown('Clipping', 'Inherit', 'w-[187px]') },
            { name: 'Render Opacity', key: true, html: textBox('Render Opacity', '1.0', 'w-[187px]') },
            { name: 'Pixel Snapping', key: true, html: dropDown('Pixel Snapping', 'Inherit', 'w-[187px]') },
            { head: '导航' }
        ];

        function renderRow(row, i) {
            const frame = 'flex border-[#1a1a1a] h-10 border-b even:h-[41px] even:border-b-2';
            if (row.head) {
                return `<div class="${frame} items-center bg-[#2f2f2f] pl-[7px] gap-[10px]"><svg class="w-4 h-3 text-[#808080]"><use href="#i-down"/></svg>${row.head}</div>`;
            }
            if (row.more) {
                return `<div class="${frame} items-center bg-[#242424] pl-[9px] gap-3"><svg class="w-3 h-4 text-[#808080]"><use href="#i-right"/></svg>${row.more}</div>`;
            }
            const dim = row.dim || (row.override && !row.on);
            const id = 'prop' + i;
            let name;
            if (row.override) {
                name = `<div class="flex items-center gap-[6px] pl-[30px]">${checkbox(id, row.on)}<label for="${id}" class="whitespace-nowrap">${row.name}</label></div>`;
            } else if (row.arrow) {
                name = `<div class="flex items-center pl-[9px] gap-3"><svg class="w-3 h-4 text-[#808080]"><use href="#i-right"/></svg>${row.name}</div>`;
            } else {
                name = `<div class="whitespace-nowrap ${row.indent ? 'pl-9' : 'pl-[33px]'}">${row.name}</div>`;
            }
            const value = row.override ? textBox(row.name, row.value, 'w-[187px]', dim) : row.html;
            const reset = row.on ? '<button aria-label="重置"><svg class="w-[18px] h-4 mr-[10px]"><use href="#i-reset"/></svg></button>' : '';
            const key = row.override || row.key ? '<button aria-label="关键帧" class="text-[#777]"><svg class="size-[22px]"><use href="#i-diamond"/></svg></button>' : '';
            return `<div class="${frame} bg-[#242424]">
                <div class="flex-none w-[212px] border-r-2 border-[#1a1a1a] grid items-center ${dim ? 'text-[#666]' : ''}">${name}</div>
                <div class="relative flex-1 flex items-center pl-[18px]">${value}</div>
                <div class="flex-none w-[68px] border-l border-[#1a1a1a] flex items-center justify-end pr-[5px]">${reset}${key}</div>
            </div>`;
        }

        document.getElementById('properties').innerHTML = rows.map(renderRow).join('');
    </script>
</body>
</html>
